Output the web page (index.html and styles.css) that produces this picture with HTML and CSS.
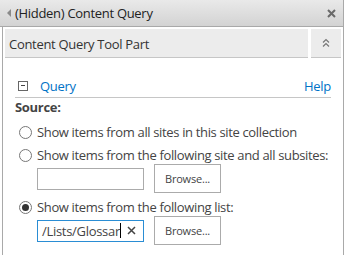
FILE: index.html
```html
<!DOCTYPE html>
<html lang="en">
<head>
  <meta charset="UTF-8">
  <title>Content Query Tool Part</title>
  <link rel="stylesheet" href="styles.css">
</head>
<body>
  <div class="pane">
    <div class="title-bar">
      <span class="title-arrow"></span>
      <span class="title-text">(Hidden) Content Query</span>
      <svg class="title-close" width="9" height="9" viewBox="0 0 9 9">
        <path d="M1 1 L8 8 M8 1 L1 8" stroke="#6a6a6a" stroke-width="2"/>
      </svg>
    </div>

    <div class="tool-head">
      <div class="tool-name">Content Query Tool Part</div>
      <div class="tool-toggle">
        <svg width="8" height="10" viewBox="0 0 8 10">
          <path d="M1 4.5 L4 1.5 L7 4.5 M1 8.5 L4 5.5 L7 8.5" fill="none" stroke="#777" stroke-width="1.2"/>
        </svg>
      </div>
    </div>

    <div class="section">
      <div class="section-head">
        <span class="collapse-box"></span>
        <a class="section-title" href="#">Query</a>
        <a class="help" href="#">Help</a>
      </div>

      <div class="label">Source:</div>

      <div class="option first">
        <span class="radio"></span>
        <span>Show items from all sites in this site collection</span>
      </div>

      <div class="option">
        <span class="radio"></span>
        <span>Show items from the following site and all subsites:</span>
      </div>
      <div class="picker">
        <input class="field" type="text">
        <button class="browse">Browse...</button>
      </div>

      <div class="option">
        <span class="radio checked"></span>
        <span>Show items from the following list:</span>
      </div>
      <div class="picker">
        <div class="field active">
          <span class="field-text">/Lists/Glossar</span><span class="caret"></span>
          <svg class="clear" width="9" height="9" viewBox="0 0 9 9">
            <path d="M1 1 L8 8 M8 1 L1 8" stroke="#444" stroke-width="1.5"/>
          </svg>
        </div>
        <button class="browse">Browse...</button>
      </div>
    </div>
  </div>
</body>
</html>
```

FILE: styles.css
```css
* {
  margin: 0;
  padding: 0;
  box-sizing: border-box;
}

body {
  font-family: 'Open Sans', 'Noto Sans', sans-serif;
  background: #fff;
  color: #444;
  width: 348px;
  height: 255px;
  overflow: hidden;
}

.pane {
  margin-left: 2px;
  width: 342px;
  height: 255px;
  border-left: 1px solid #a9a9a9;
  border-right: 1px solid #a9a9a9;
}

.title-bar {
  display: flex;
  align-items: center;
  height: 27px;
  margin-left: -3px;
  padding-left: 7px;
  padding-right: 7px;
  background: linear-gradient(#e9e9e9, #d3d3d3);
  border-bottom: 1px solid #a9a9a9;
  font-size: 13px;
  color: #222;
}

.title-arrow {
  width: 0;
  height: 0;
  border-top: 4px solid transparent;
  border-bottom: 4px solid transparent;
  border-right: 4px solid #8a8a8a;
  margin-right: 4px;
}

.title-text {
  flex: 1;
  letter-spacing: -0.3px;
}

.tool-head {
  display: flex;
  gap: 3px;
  padding: 2px 2px 0 2px;
  height: 31px;
}

.tool-name {
  flex: 1;
  background: #ececec;
  border-bottom: 1px solid #c6c6c6;
  font-size: 13px;
  color: #333;
  padding: 6px 0 0 4px;
  letter-spacing: -0.3px;
}

.tool-toggle {
  width: 30px;
  background: #ececec;
  border-bottom: 1px solid #c6c6c6;
  display: flex;
  justify-content: center;
  padding-top: 9px;
}

.section {
  padding: 20px 12px 0 12px;
}

.section-head {
  display: flex;
  align-items: center;
  height: 20px;
  padding: 0 0 4px 3px;
  border-bottom: 1px solid #c6c6c6;
  font-size: 13px;
}

.collapse-box {
  width: 10px;
  height: 10px;
  border: 1px solid #666;
  position: relative;
  margin-right: 12px;
}

.collapse-box::after {
  content: '';
  position: absolute;
  left: 2px;
  top: 3px;
  width: 4px;
  height: 1px;
  background: #444;
}

.section-title,
.help {
  color: #0072c6;
  text-decoration: none;
  letter-spacing: -0.3px;
}

.section-title {
  flex: 1;
}

.label {
  font-weight: bold;
  font-size: 13px;
  line-height: 16px;
  margin-top: 1px;
  letter-spacing: -0.3px;
}

.option {
  display: flex;
  align-items: center;
  gap: 5px;
  height: 18px;
  font-size: 13px;
  margin-top: 5px;
  padding-left: 4px;
  letter-spacing: -0.35px;
}

.option.first {
  margin-top: 8px;
}

.radio {
  width: 13px;
  height: 13px;
  border: 1px solid #777;
  border-radius: 50%;
  position: relative;
}

.radio.checked::after {
  content: '';
  position: absolute;
  left: 2px;
  top: 2px;
  width: 7px;
  height: 7px;
  border-radius: 50%;
  background: #333;
}

.picker {
  display: flex;
  align-items: center;
  gap: 10px;
  padding-left: 22px;
}

.field {
  width: 107px;
  height: 22px;
  border: 1px solid #ababab;
  font-family: inherit;
  font-size: 13px;
  color: #444;
}

.field.active {
  display: flex;
  align-items: center;
  border-color: #2a8dd4;
  padding-left: 4px;
  letter-spacing: -0.3px;
}

.caret {
  width: 1px;
  height: 15px;
  background: #000;
}

.clear {
  margin-left: 6px;
}

.browse {
  width: 67px;
  height: 29px;
  background: #fff;
  border: 1px solid #ababab;
  font-family: inherit;
  font-size: 11px;
  color: #444;
  letter-spacing: -0.2px;
}
```
